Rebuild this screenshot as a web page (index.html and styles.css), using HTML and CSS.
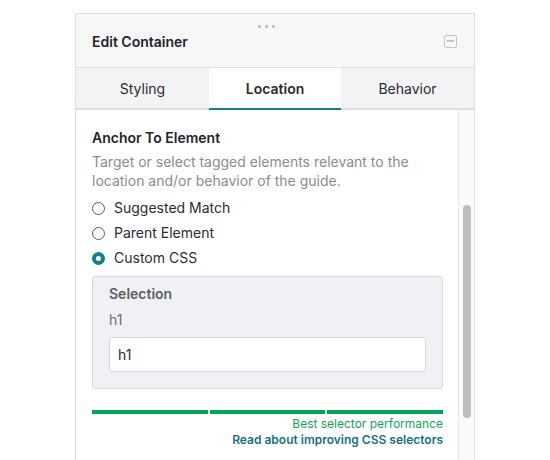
FILE: index.html
```html
<!DOCTYPE html>
<html>
<head>
<meta charset="utf-8">
<link rel="stylesheet" href="styles.css">
</head>
<body>
<div class="panel">
  <div class="header">
    <div class="grip"><span></span><span></span><span></span></div>
    <div class="title-row">
      <div class="title">Edit Container</div>
      <div class="minimize"><span></span></div>
    </div>
  </div>
  <div class="tabs">
    <div class="tab">Styling</div>
    <div class="tab active">Location</div>
    <div class="tab">Behavior</div>
  </div>
  <div class="body">
    <div class="content">
      <div class="section-title">Anchor To Element</div>
      <div class="desc">Target or select tagged elements relevant to the location and/or behavior of the guide.</div>
      <div class="radios">
        <div class="radio-row"><span class="radio"></span>Suggested Match</div>
        <div class="radio-row"><span class="radio"></span>Parent Element</div>
        <div class="radio-row"><span class="radio checked"></span>Custom CSS</div>
      </div>
      <div class="selection">
        <div class="sel-title">Selection</div>
        <div class="sel-value">h1</div>
        <div class="input">h1</div>
      </div>
      <div class="meter"><span></span><span></span><span></span></div>
      <div class="meter-text">Best selector performance</div>
      <div class="link">Read about improving CSS selectors</div>
    </div>
    <div class="track"><div class="thumb"></div></div>
  </div>
</div>
</body>
</html>
```
FILE: styles.css
```css
* { box-sizing: border-box; }
body {
  margin: 0;
  background: #ffffff;
  font-family: Inter, "Noto Sans", sans-serif;
  color: #26262e;
}
.panel {
  margin: 13px 0 0 75px;
  width: 400px;
  height: 460px;
  border: 1px solid #dcdce4;
  border-bottom: none;
  display: flex;
  flex-direction: column;
  background: #fff;
}
.header {
  background: #f7f7f8;
  height: 54px;
  border-bottom: 1px solid #dedee6;
  display: flex;
  flex-direction: column;
  padding: 11px 17px 0 16px;
}
.grip {
  display: flex;
  justify-content: center;
  gap: 4px;
  height: 3px;
  padding-right: 17px;
}
.grip span {
  width: 3px;
  height: 3px;
  border-radius: 50%;
  background: #b4b4bc;
}
.title-row {
  display: flex;
  align-items: center;
  justify-content: space-between;
  margin-top: 3px;
  height: 20px;
}
.title {
  font-size: 14px;
  font-weight: 600;
  color: #23232b;
}
.minimize {
  width: 13px;
  height: 13px;
  border: 1.5px solid #c3c3cb;
  border-radius: 2px;
  display: flex;
  align-items: center;
  justify-content: center;
}
.minimize span {
  width: 7px;
  height: 1.5px;
  background: #c3c3cb;
}
.tabs {
  display: grid;
  grid-template-columns: 133px 132px 133px;
  align-items: start;
  background: #f3f3f5;
  height: 42px;
  border-bottom: 2px solid #dcdce4;
}
.tab {
  display: flex;
  align-items: center;
  justify-content: center;
  font-size: 14px;
  color: #2a2a32;
  height: 40px;
}
.tab.active {
  background: #fff;
  font-weight: 600;
  height: 42px;
  border-bottom: 2px solid #16808c;
}
.body {
  display: flex;
  flex: 1;
  min-height: 0;
}
.content {
  flex: 1;
  padding: 18px 15px 0 16px;
}
.section-title {
  font-size: 14px;
  font-weight: 600;
  line-height: 20px;
  color: #23232b;
}
.desc {
  font-size: 14px;
  line-height: 19px;
  color: #8b8b95;
  margin-top: 4px;
}
.radios {
  margin-top: 8px;
  display: flex;
  flex-direction: column;
  gap: 5px;
}
.radio-row {
  display: flex;
  align-items: center;
  font-size: 14px;
  line-height: 20px;
  color: #2b2b33;
}
.radio {
  width: 13px;
  height: 13px;
  border: 1.3px solid #5a5a62;
  border-radius: 50%;
  margin-right: 9px;
}
.radio.checked {
  border: 4px solid #137f8d;
  background: #fff;
}
.selection {
  margin-top: 8px;
  background: #f1f1f5;
  border: 1px solid #d7d7df;
  border-radius: 3px;
  padding: 7px 16px 16px 16px;
}
.sel-title {
  font-size: 14px;
  font-weight: 600;
  line-height: 20px;
  color: #5d5d67;
}
.sel-value {
  font-size: 14px;
  line-height: 20px;
  color: #6c6c74;
  margin-top: 6px;
}
.input {
  margin-top: 7px;
  height: 35px;
  background: #fff;
  border: 1px solid #d7d7df;
  border-radius: 3px;
  padding: 0 8px;
  display: flex;
  align-items: center;
  font-size: 14px;
  color: #2a2a32;
}
.meter {
  margin-top: 21px;
  display: flex;
  gap: 2px;
  height: 4px;
}
.meter span {
  flex: 1;
  background: #02a35b;
}
.meter-text {
  text-align: right;
  font-size: 12px;
  line-height: 16px;
  margin-top: 2px;
  color: #14a35a;
}
.link {
  text-align: right;
  font-size: 12px;
  line-height: 16px;
  font-weight: 600;
  color: #17727f;
}
.track {
  width: 16px;
  border-left: 1px solid #e6e6ea;
  background: #fafafa;
  padding: 95px 0 0 4px;
}
.thumb {
  width: 8px;
  height: 213px;
  border-radius: 4px;
  background: #bdbdbd;
}
```
